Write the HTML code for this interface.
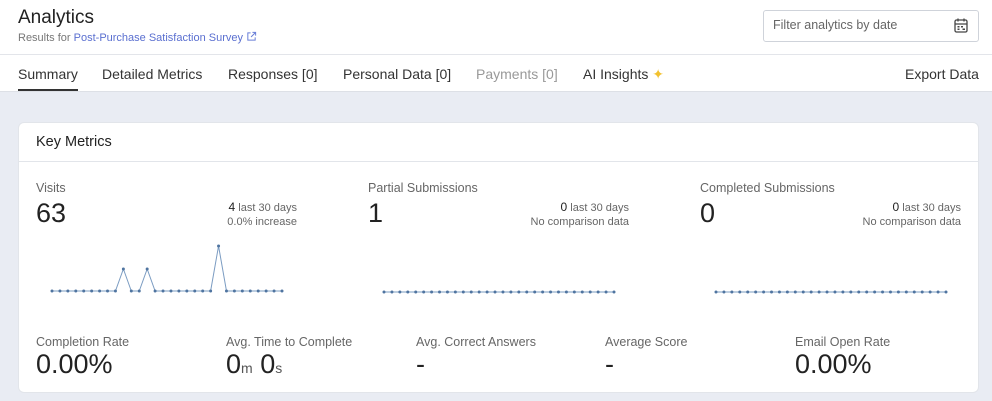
<!DOCTYPE html>
<html><head><style>
*{margin:0;padding:0;box-sizing:border-box}
body{width:992px;height:401px;background:#e9ecf3;font-family:"Liberation Sans",sans-serif;position:relative;overflow:hidden;color:#222}
.a{position:absolute;white-space:nowrap}
.hdr{position:absolute;left:0;top:0;width:992px;height:92px;background:#fff;border-bottom:1px solid #dde0e6}
.card{position:absolute;left:18px;top:122px;width:961px;height:271px;background:#fff;border-radius:6px;border:1px solid #e2e5ea}
.lbl{font-size:12.5px;color:#666}
.big{font-size:27px;color:#222}
.sm{font-size:11px;color:#666;text-align:right}
.sm b{font-weight:normal;color:#222;font-size:12px}
.tab{font-size:14px;color:#333;top:66px}
</style></head><body>
<div class="hdr"></div>
<div class="a" style="left:18px;top:7px;font-size:19px;color:#222">Analytics</div>
<div class="a" style="left:18px;top:31px;font-size:11px;color:#777">Results for <span style="color:#5a6fd0">Post-Purchase Satisfaction Survey</span>
<svg width="11" height="11" viewBox="0 0 12 12" style="vertical-align:-1px"><path d="M5 2H2v8h8V7M7 1.5h3.5V5M10.5 1.5 5.5 6.5" fill="none" stroke="#6a7fd8" stroke-width="1.1"/></svg></div>
<div class="a" style="left:763px;top:10px;width:216px;height:32px;border:1px solid #cfd3da;border-radius:3px"></div>
<div class="a" style="left:773px;top:18px;font-size:12.5px;color:#666">Filter analytics by date</div>
<svg class="a" style="left:953px;top:17px" width="16" height="17" viewBox="0 0 16 17"><rect x="2" y="3" width="12" height="12" rx="1.5" fill="none" stroke="#444" stroke-width="1.3"/><path d="M2 7h12M5 1.5v3M11 1.5v3" stroke="#444" stroke-width="1.3"/><rect x="4.5" y="9" width="2" height="1.5" fill="#444"/><rect x="8" y="9" width="2" height="1.5" fill="#444"/><rect x="4.5" y="11.5" width="2" height="1.5" fill="#444"/><rect x="9.5" y="11.5" width="2.5" height="1.5" fill="#444"/></svg>
<div class="a" style="left:0;top:54px;width:992px;height:1px;background:#e3e5ea"></div>
<div class="a tab" style="left:18px">Summary</div>
<div class="a" style="left:18px;top:89px;width:60px;height:2px;background:#333"></div>
<div class="a tab" style="left:102px">Detailed Metrics</div>
<div class="a tab" style="left:228px">Responses [0]</div>
<div class="a tab" style="left:343px">Personal Data [0]</div>
<div class="a tab" style="left:476px;color:#999">Payments [0]</div>
<div class="a tab" style="left:583px">AI Insights <span style="color:#f2c12e">✦</span></div>
<div class="a tab" style="left:905px">Export Data</div>

<div class="card"></div>
<div class="a" style="left:36px;top:134px;font-size:14.5px;color:#222">Key Metrics</div>
<div class="a" style="left:19px;top:161px;width:959px;height:1px;background:#e2e5ea"></div>

<div class="a lbl" style="left:36px;top:181px">Visits</div>
<div class="a big" style="left:36px;top:198px">63</div>
<div class="a sm" style="left:196px;top:200px;width:101px"><b>4</b> last 30 days</div>
<div class="a sm" style="left:196px;top:216px;width:101px">0.0% increase</div>

<div class="a lbl" style="left:368px;top:181px">Partial Submissions</div>
<div class="a big" style="left:368px;top:198px">1</div>
<div class="a sm" style="left:500px;top:200px;width:129px"><b>0</b> last 30 days</div>
<div class="a sm" style="left:500px;top:216px;width:129px">No comparison data</div>

<div class="a lbl" style="left:700px;top:181px">Completed Submissions</div>
<div class="a big" style="left:700px;top:198px">0</div>
<div class="a sm" style="left:832px;top:200px;width:129px"><b>0</b> last 30 days</div>
<div class="a sm" style="left:832px;top:216px;width:129px">No comparison data</div>

<svg class="a" style="left:0;top:0" width="992" height="401">
<defs><marker id="m" markerWidth="4" markerHeight="4" refX="2" refY="2" markerUnits="userSpaceOnUse"><circle cx="2" cy="2" r="1.5" fill="#4f74a0"/></marker></defs>
<g fill="none" stroke="#7b9cc2" stroke-width="1" marker-start="url(#m)" marker-mid="url(#m)" marker-end="url(#m)">
<polyline points="52,291 59.93,291 67.86,291 75.79,291 83.72,291 91.66,291 99.59,291 107.52,291 115.45,291 123.38,269 131.31,291 139.24,291 147.17,269 155.1,291 163.03,291 170.97,291 178.9,291 186.83,291 194.76,291 202.69,291 210.62,291 218.55,246 226.48,291 234.41,291 242.34,291 250.28,291 258.21,291 266.14,291 274.07,291 282,291"/>
<polyline points="384,292 391.93,292 399.86,292 407.79,292 415.72,292 423.66,292 431.59,292 439.52,292 447.45,292 455.38,292 463.31,292 471.24,292 479.17,292 487.1,292 495.03,292 502.97,292 510.9,292 518.83,292 526.76,292 534.69,292 542.62,292 550.55,292 558.48,292 566.41,292 574.34,292 582.28,292 590.21,292 598.14,292 606.07,292 614,292"/>
<polyline points="716,292 723.93,292 731.86,292 739.79,292 747.72,292 755.66,292 763.59,292 771.52,292 779.45,292 787.38,292 795.31,292 803.24,292 811.17,292 819.1,292 827.03,292 834.97,292 842.9,292 850.83,292 858.76,292 866.69,292 874.62,292 882.55,292 890.48,292 898.41,292 906.34,292 914.28,292 922.21,292 930.14,292 938.07,292 946,292"/>
</g>
</svg>

<div class="a lbl" style="left:36px;top:335px">Completion Rate</div>
<div class="a big" style="left:36px;top:349px">0.00%</div>
<div class="a lbl" style="left:226px;top:335px">Avg. Time to Complete</div>
<div class="a big" style="left:226px;top:349px">0<span style="font-size:14px;color:#555">m</span> 0<span style="font-size:14px;color:#555">s</span></div>
<div class="a lbl" style="left:416px;top:335px">Avg. Correct Answers</div>
<div class="a big" style="left:416px;top:349px">-</div>
<div class="a lbl" style="left:605px;top:335px">Average Score</div>
<div class="a big" style="left:605px;top:349px">-</div>
<div class="a lbl" style="left:795px;top:335px">Email Open Rate</div>
<div class="a big" style="left:795px;top:349px">0.00%</div>
</body></html>
